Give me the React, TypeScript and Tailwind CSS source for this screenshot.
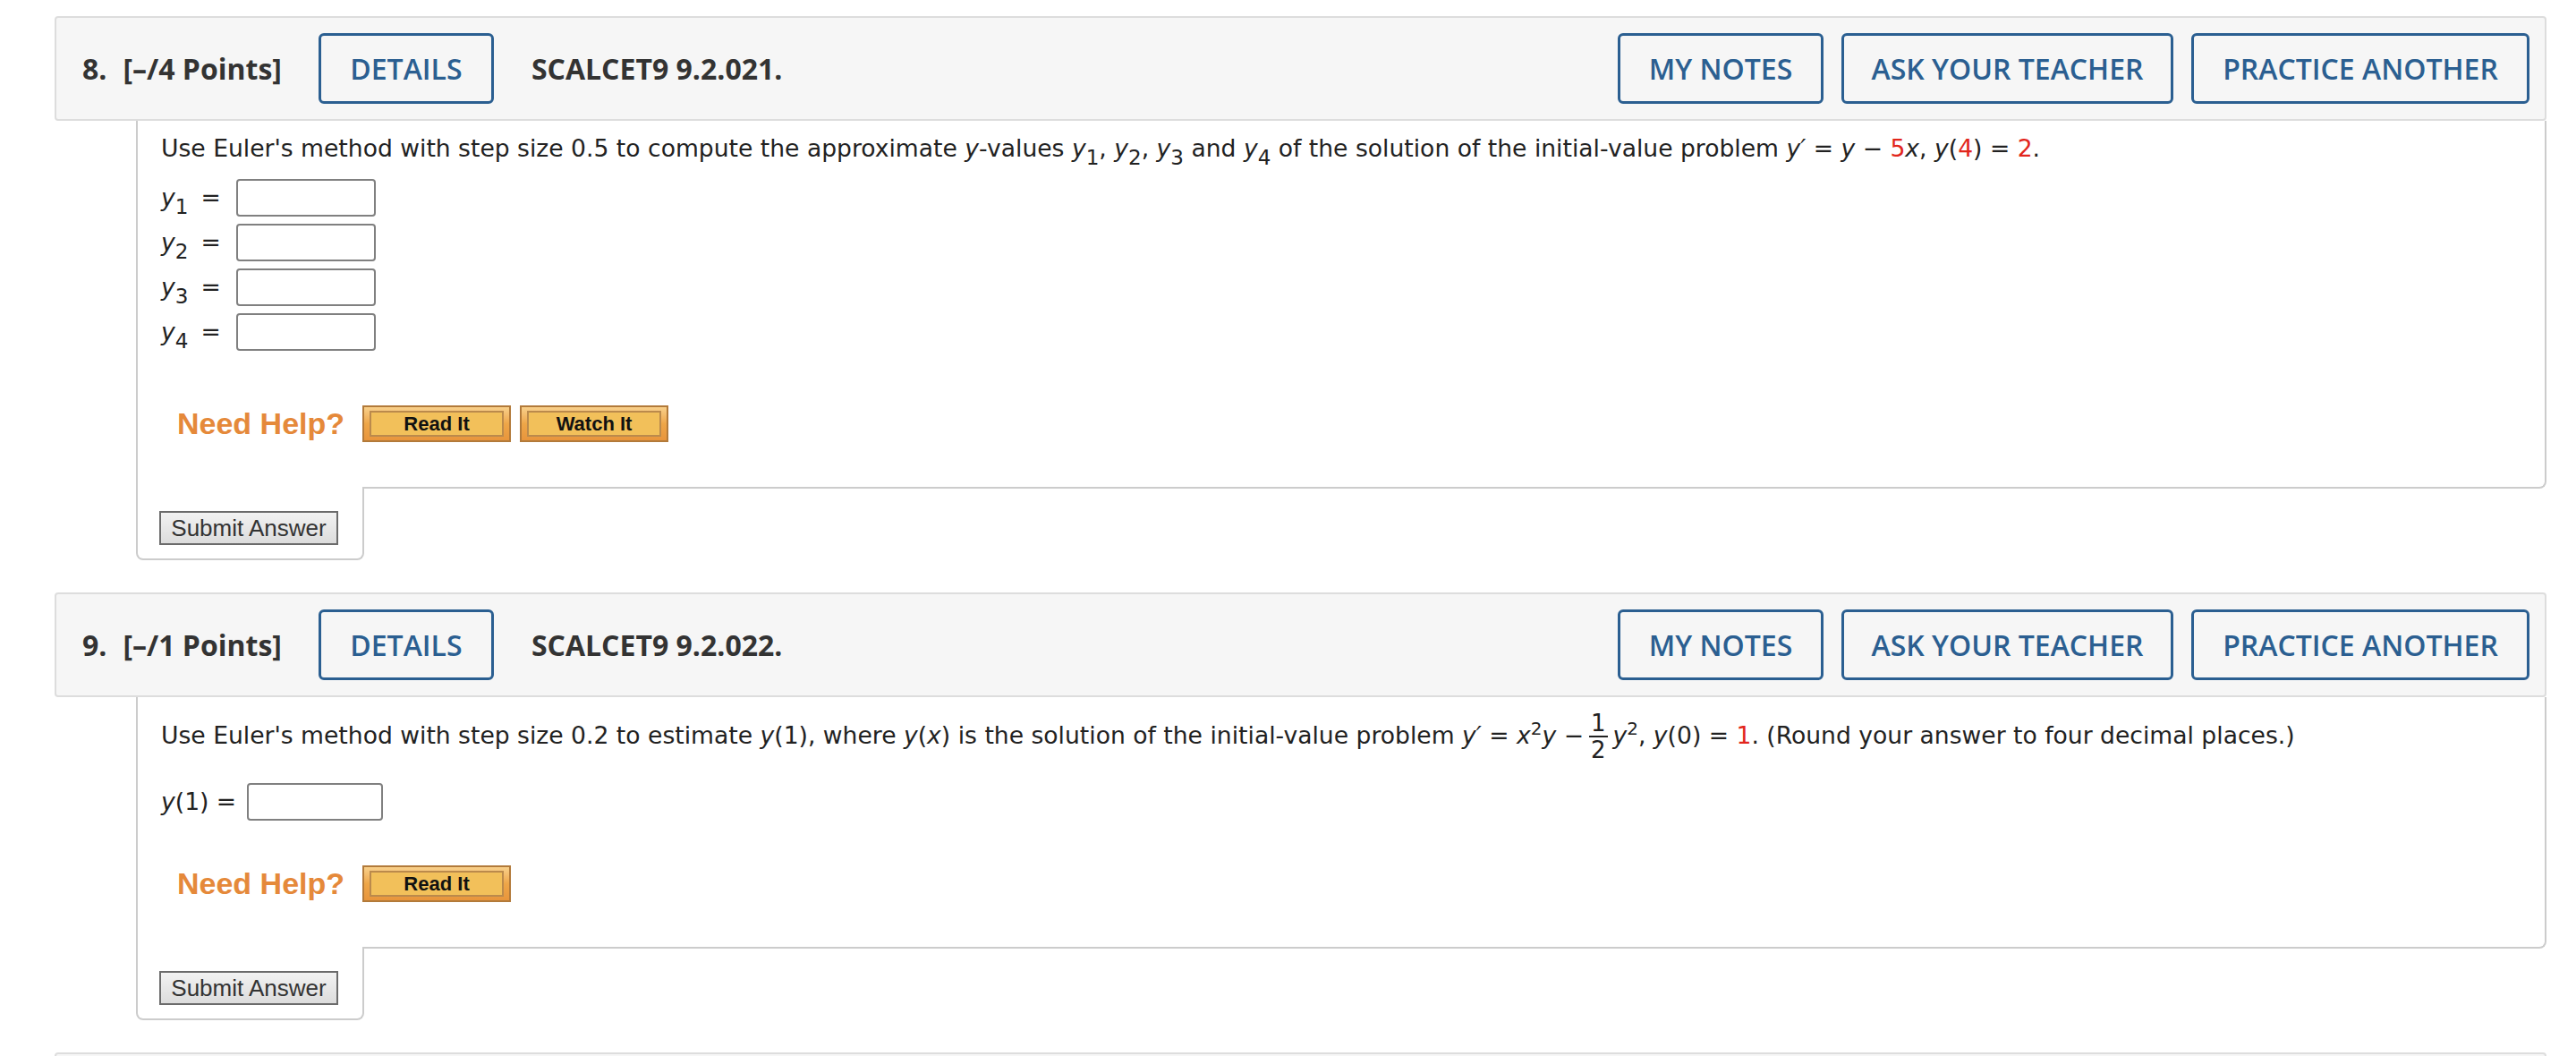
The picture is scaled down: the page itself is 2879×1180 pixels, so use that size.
import React from 'react';

const sans = "font-['Open_Sans',sans-serif]";
const verdana = "font-['DejaVu_Sans','Verdana',sans-serif]";
const arial = "font-['Liberation_Sans','Arial',sans-serif]";

function HeadButton({ label, width }: { label: string; width: string }) {
  return (
    <button
      className={`${width} h-[79px] rounded-[6px] border-[3px] border-[#2b5f91] bg-[#f6f6f6] text-[32px] font-semibold text-[#2b5f91] ${sans}`}
    >
      {label}
    </button>
  );
}

function QuestionHeader({ num, points, code }: { num?: string; points?: string; code?: string }) {
  if (!num) {
    return <div className="h-[117px] rounded-[4px] border-2 border-[#dddddd] bg-[#f6f6f6]" />;
  }
  return (
    <div className="flex h-[117px] items-center rounded-[4px] border-2 border-[#dddddd] bg-[#f6f6f6] pl-[29px] pr-[17px]">
      <span className={`text-[32px] font-bold text-[#333333] ${sans}`}>{num}</span>
      <span className={`ml-[18px] text-[32px] font-bold text-[#333333] ${sans}`}>{points}</span>
      <div className="ml-[41px]">
        <HeadButton label="DETAILS" width="w-[196px]" />
      </div>
      <span className={`ml-[42px] text-[32px] font-bold text-[#333333] ${sans}`}>{code}</span>
      <div className="ml-auto flex gap-[20px]">
        <HeadButton label="MY NOTES" width="w-[230px]" />
        <HeadButton label="ASK YOUR TEACHER" width="w-[371px]" />
        <HeadButton label="PRACTICE ANOTHER" width="w-[378px]" />
      </div>
    </div>
  );
}

function HelpButton({ label }: { label: string }) {
  return (
    <div className="flex h-[41px] w-[166px] items-center justify-center border-2 border-[#b27a3a] bg-gradient-to-b from-[#f8d08a] via-[#eea648] to-[#e8953c] px-[6px]">
      <div
        className={`flex h-[29px] w-full items-center justify-center border-2 border-[#bb8a4c] bg-[#f2c05a] text-[22px] font-bold text-[#111111] ${arial}`}
      >
        {label}
      </div>
    </div>
  );
}

function NeedHelp({ watch }: { watch?: boolean }) {
  return (
    <div className="flex h-[41px] items-center pl-[18px]">
      <span className={`text-[34px] font-bold text-[#e5893a] ${arial}`}>Need Help?</span>
      <div className="ml-[20px] flex gap-[10px]">
        <HelpButton label="Read It" />
        {watch && <HelpButton label="Watch It" />}
      </div>
    </div>
  );
}

function SubmitBox() {
  return (
    <div className="relative -mt-[2px] w-[255px] rounded-b-[8px] border-x-2 border-b-2 border-[#cccccc] bg-white pb-[15px] pl-[24px] pt-[27px]">
      <button
        className={`h-[38px] w-[200px] border-2 border-[#6b6b6b] bg-gradient-to-b from-[#f2f2f2] to-[#dcdcdc] text-[26px] leading-none text-[#333333] ${arial}`}
      >
        Submit Answer
      </button>
    </div>
  );
}

function Input({ width }: { width: string }) {
  return <div className={`${width} h-[42px] rounded-[4px] border-2 border-[#808080] bg-white`} />;
}

function Y({ children }: { children: React.ReactNode }) {
  return <i>{children}</i>;
}

function Sub({ children }: { children: React.ReactNode }) {
  return <span className="relative top-[9px] text-[23px] leading-none">{children}</span>;
}

const red = 'text-[#e2261c]';

function Question8() {
  const rows = ['1', '2', '3', '4'];
  return (
    <div>
      <QuestionHeader num="8." points="[–/4 Points]" code="SCALCET9 9.2.021." />
      <div className="ml-[91px]">
        <div className={`rounded-br-[8px] border-x-2 border-b-2 border-[#cccccc] pb-[50px] pl-[26px] pt-[11px] text-[26.6px] text-[#222222] ${verdana}`}>
          <p className="flex h-[40px] items-center whitespace-nowrap">
            <span>
              Use Euler's method with step size 0.5 to compute the approximate <Y>y</Y>-values{' '}
              <Y>y</Y><Sub>1</Sub>, <Y>y</Y><Sub>2</Sub>, <Y>y</Y><Sub>3</Sub> and <Y>y</Y><Sub>4</Sub> of the
              solution of the initial-value problem <Y>y′</Y> = <Y>y</Y> − <span className={red}>5</span>
              <Y>x</Y>, <Y>y</Y>(<span className={red}>4</span>) = <span className={red}>2</span>.
            </span>
          </p>
          <div className="mt-[10px] flex flex-col">
            {rows.map((r) => (
              <div key={r} className="flex h-[50px] items-center">
                <span className="w-[55px] whitespace-nowrap">
                  <Y>y</Y>
                  <Sub>{r}</Sub>
                  <span className="ml-[14px]">=</span>
                </span>
                <span className="ml-[29px]">
                  <Input width="w-[156px]" />
                </span>
              </div>
            ))}
          </div>
          <div className="mt-[57px]">
            <NeedHelp watch />
          </div>
        </div>
        <SubmitBox />
      </div>
    </div>
  );
}

function Fraction() {
  return (
    <span className="mx-[6px] inline-flex flex-col items-center align-middle text-[26px] leading-[28px]">
      <span className="px-[2px]">1</span>
      <span className="h-[2px] w-full bg-[#222222]" />
      <span className="px-[2px]">2</span>
    </span>
  );
}

function Question9() {
  return (
    <div>
      <QuestionHeader num="9." points="[–/1 Points]" code="SCALCET9 9.2.022." />
      <div className="ml-[91px]">
        <div className={`rounded-br-[8px] border-x-2 border-b-2 border-[#cccccc] pb-[50px] pl-[26px] pt-[16px] text-[26.6px] text-[#222222] ${verdana}`}>
          <p className="flex h-[56px] items-center whitespace-nowrap">
            <span>
              Use Euler's method with step size 0.2 to estimate <Y>y</Y>(1), where <Y>y</Y>(<Y>x</Y>) is the
              solution of the initial-value problem <Y>y′</Y> = <Y>x</Y><sup>2</sup><Y>y</Y> −
              <Fraction />
              <Y>y</Y><sup>2</sup>, <Y>y</Y>(0) = <span className={red}>1</span>. (Round your answer to four decimal
              places.)
            </span>
          </p>
          <div className="mt-[24px] flex h-[42px] items-center">
            <span className="whitespace-nowrap">
              <Y>y</Y>(1) =
            </span>
            <span className="ml-[12px]">
              <Input width="w-[152px]" />
            </span>
          </div>
          <div className="mt-[50px]">
            <NeedHelp />
          </div>
        </div>
        <SubmitBox />
      </div>
    </div>
  );
}

export default function App() {
  return (
    <div className="h-[1180px] overflow-hidden bg-white pl-[61px] pr-[33px] pt-[18px]">
      <Question8 />
      <div className="mt-[36px]">
        <Question9 />
      </div>
      <div className="mt-[36px]">
        <QuestionHeader />
      </div>
    </div>
  );
}
